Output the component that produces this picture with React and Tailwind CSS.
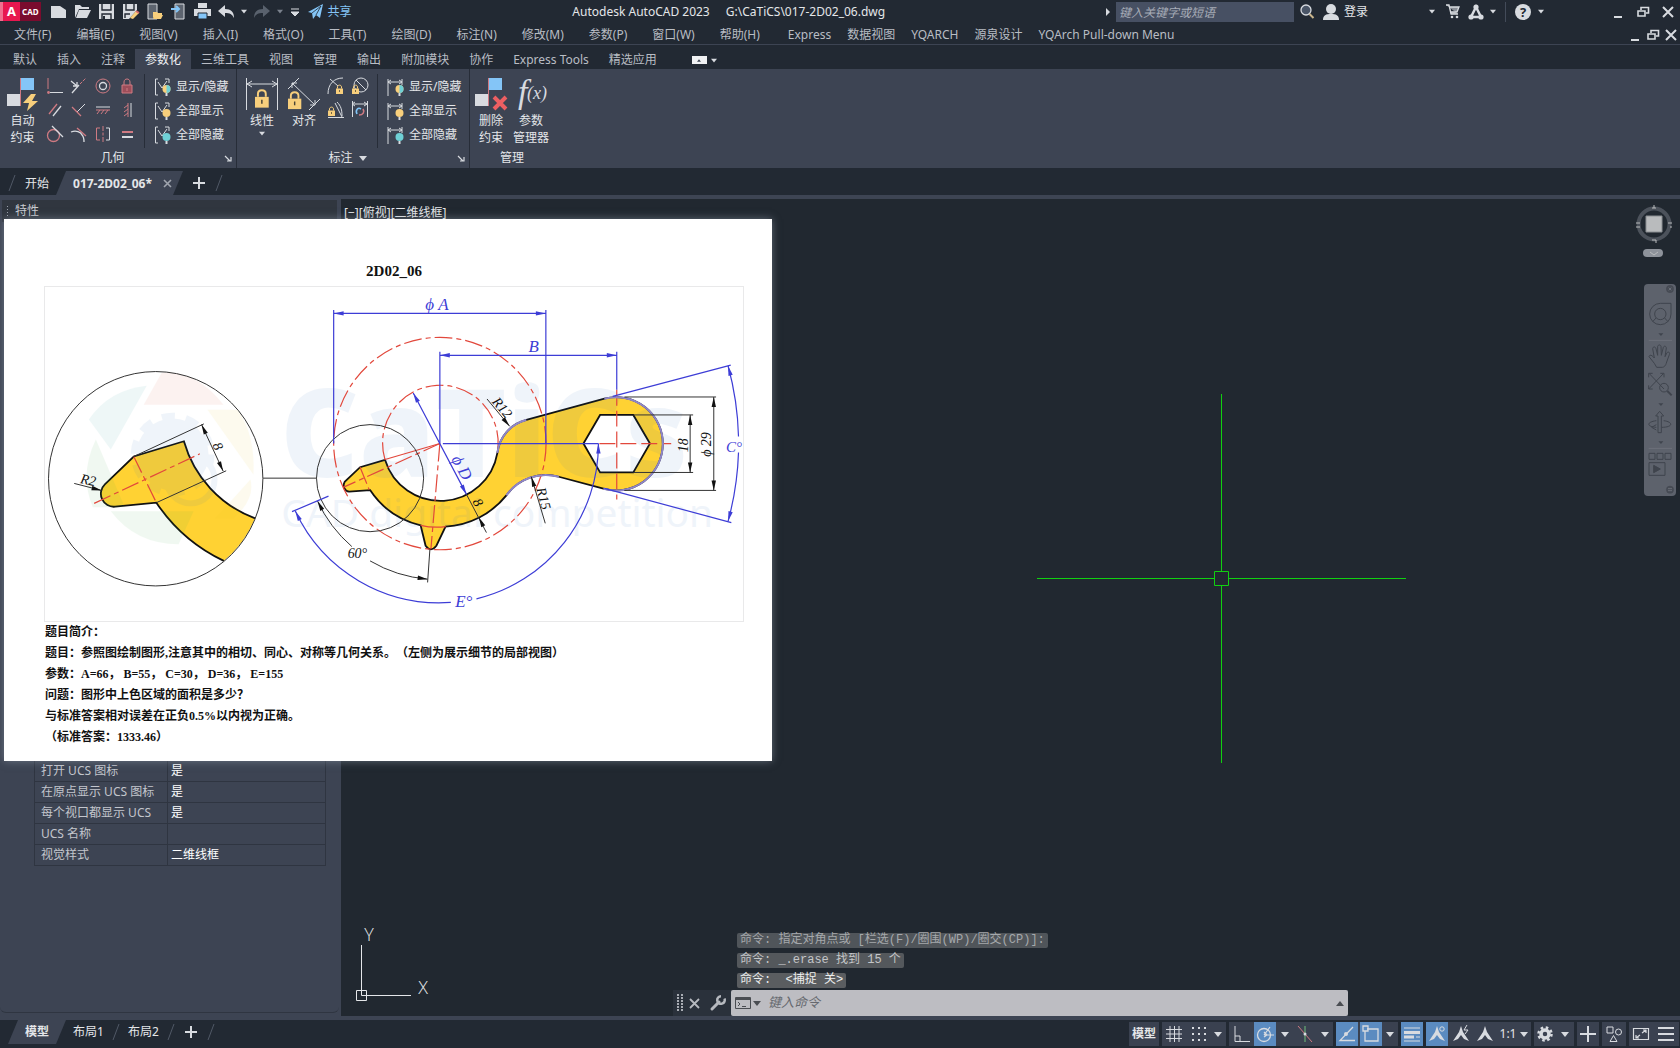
// src/App.jsx
import { useState } from "react";

const MENUS = ["文件(F)", "编辑(E)", "视图(V)", "插入(I)", "格式(O)", "工具(T)", "绘图(D)", "标注(N)", "修改(M)", "参数(P)", "窗口(W)", "帮助(H)"];
const EXTRA_MENUS = ["Express", "数据视图", "YQARCH", "源泉设计", "YQArch Pull-down Menu"];
const TABS = ["默认", "插入", "注释", "参数化", "三维工具", "视图", "管理", "输出", "附加模块", "协作", "Express Tools", "精选应用"];
const PROPS = [
  ["打开 UCS 图标", "是"],
  ["在原点显示 UCS 图标", "是"],
  ["每个视口都显示 UCS", "是"],
  ["UCS 名称", ""],
  ["视觉样式", "二维线框"],
];
const NOTES = [
  "题目简介：",
  "题目：参照图绘制图形,注意其中的相切、同心、对称等几何关系。（左侧为展示细节的局部视图）",
  "参数：A=66， B=55， C=30， D=36， E=155",
  "问题：图形中上色区域的面积是多少？",
  "与标准答案相对误差在正负0.5%以内视为正确。",
  "（标准答案：1333.46）",
];

const W = "#d8dbe0";
const P = "#cf7a82";
const Y = "#f8cf7c";
const B = "#84c5f7";
const C = "#6fd0d6";

function Svg({ w = 16, h = 16, box, className = "", children }) {
  return (
    <svg width={w} height={h} viewBox={box || `0 0 ${w} ${h}`} fill="none" className={`shrink-0 overflow-visible ${className}`} aria-hidden="true">
      {children}
    </svg>
  );
}

function Caret({ up, className = "", fill = W }) {
  return (
    <Svg w={8} h={5} className={className}>
      <path d={up ? "M0 5h8L4 0z" : "M0 0h8L4 5z"} fill={fill} />
    </Svg>
  );
}

function IconButton({ label, className = "", children }) {
  return (
    <button type="button" aria-label={label} className={`flex items-center justify-center shrink-0 ${className}`}>
      {children}
    </button>
  );
}

function Plus() {
  return <Svg w={12} h={12}><path d="M6 0v12M0 6h12" stroke={W} strokeWidth="2" /></Svg>;
}

function Slash() {
  return <Svg w={8} h={16}><path d="M7 0L1 16" stroke="#505866" /></Svg>;
}

function WindowButtons({ className }) {
  return (
    <div className={`flex items-center ${className}`}>
      <IconButton label="最小化"><Svg w={12} h={14}><path d="M2 12h8" stroke={W} strokeWidth="2" /></Svg></IconButton>
      <IconButton label="还原">
        <Svg w={12} h={12}><path d="M1 5h7v5H1zM4 4V1.5h7.5V7H9" stroke={W} strokeWidth="1.6" /></Svg>
      </IconButton>
      <IconButton label="关闭"><Svg w={12} h={12}><path d="M1 1l10 10M11 1L1 11" stroke={W} strokeWidth="2" /></Svg></IconButton>
    </div>
  );
}

/* ---------- title bar ---------- */

const QUICK = [
  ["新建", <path key="a" d="M1 3h9l6 4v8H1z" fill={W} />],
  ["打开", <path key="a" d="M1 15V2h5l2 2h7v2H5zM5 7h12l-4 8H2z" fill={W} />],
  ["保存", <g key="a"><path d="M1 1h15v15H1z" fill={W} /><path d="M4 1v6h9V1M4 16v-5h9v5" stroke="#222933" strokeWidth="1.4" /><path d="M6 13v3" stroke="#222933" strokeWidth="2" /></g>],
  ["另存为", <g key="a"><path d="M1 1h14v6l-8 9H1z" fill={W} /><path d="M4 1v6h8V1M3 15v-4h5" stroke="#222933" strokeWidth="1.4" /><path d="M8 15l6-7 3 2-6 6z" fill={Y} /><path d="M14 8l3 2" stroke="#d56b6b" strokeWidth="2" /></g>],
  ["从 Web 和移动设备打开", <g key="a"><path d="M2 1h9v15H2z" fill="#5d646f" stroke={W} /><path d="M7 15V9h4l1 1h4v2h-6zM9 12h8l-2 4H7z" fill={Y} /></g>],
  ["保存到 Web 和移动设备", <g key="a"><path d="M5 1h9v15H5z" fill="#5d646f" stroke={W} /><path d="M1 6h8M6 3l3 3-3 3" stroke={B} strokeWidth="2" /></g>],
  ["打印", <g key="a"><path d="M4 0h9v5H4zM0 6h17v7H0z" fill={W} /><path d="M4 10h9v6H4z" fill={B} stroke="#222933" /></g>],
];

function TitleBar() {
  return (
    <header className="flex items-center justify-between h-[23px] pr-[6px]">
      <div className="flex items-center h-full">
        <div className="flex h-[19px] items-center mr-[9px] bg-[#7a0c2e] text-white font-bold">
          <span className="w-[3px] h-full bg-[#f0708f]" />
          <span className="bg-[#e8174f] h-full w-[17px] text-center text-[13px] leading-[19px]">A</span>
          <span className="px-[2px] text-[8px]">CAD</span>
        </div>
        <div className="flex gap-[7px]">
          {QUICK.map(([label, art]) => (
            <IconButton key={label} label={label}><Svg w={17} h={17}>{art}</Svg></IconButton>
          ))}
        </div>
        <IconButton label="放弃" className="ml-[7px]">
          <Svg w={16} h={14}><path d="M0 6l7-6v4c6 0 9 3 9 9-2-4-4-5-9-5v4z" fill={W} /></Svg>
        </IconButton>
        <Caret className="ml-[6px] scale-75" />
        <IconButton label="重做" className="ml-[6px]">
          <Svg w={16} h={14}><path d="M16 6L9 0v4c-6 0-9 3-9 9 2-4 4-5 9-5v4z" fill="#59616d" /></Svg>
        </IconButton>
        <Caret className="ml-[6px] scale-75" fill="#7b828d" />
        <Svg w={8} h={8} className="ml-[7px]"><path d="M0 1h8M0 4h8L4 8z" stroke={W} strokeWidth="1" fill={W} /></Svg>
        <button type="button" className="flex items-center gap-[5px] ml-[9px] text-[#84c5f7]">
          <Svg w={15} h={15}><path d="M0 8L15 0l-3 14-4-3-3 4-1-6z" fill={B} /><path d="M4 9l9-7-5 9" stroke="#222933" strokeWidth="0.8" /></Svg>
          共享
        </button>
      </div>
      <h1 className="flex gap-4 text-[#e4e6e9]"><span>Autodesk AutoCAD 2023</span><span>G:\CaTiCS\017-2D02_06.dwg</span></h1>
      <div className="flex items-center">
        <Svg w={5} h={8} className="mr-[5px]"><path d="M0 0v8l4-4z" fill={W} /></Svg>
        <input
          type="search"
          aria-label="搜索"
          placeholder="键入关键字或短语"
          className="w-[178px] h-5 px-[3px] bg-[#475063] font-['Noto_Sans_CJK_SC',sans-serif] italic outline-none placeholder:text-[#a7adb8]"
        />
        <IconButton label="查找" className="ml-[6px]">
          <Svg w={14} h={15}><circle cx="6" cy="6" r="5" stroke={W} strokeWidth="1.3" fill="#4a5567" /><path d="M9.5 10l4 4" stroke="#c9b58c" strokeWidth="2" /></Svg>
        </IconButton>
        <button type="button" className="flex items-center gap-[5px] ml-[9px] text-[#e4e6e9]">
          <Svg w={16} h={16}><circle cx="8" cy="5" r="5" fill={W} /><path d="M0 16c0-5 3-6 8-6s8 1 8 6z" fill={W} /></Svg>
          登录
        </button>
        <Caret className="ml-[60px] scale-75" />
        <IconButton label="购物车" className="ml-[10px]">
          <Svg w={14} h={15}><path d="M0 1h3l2 9h7M4 3h9l-2 5H5" stroke={W} strokeWidth="1.3" fill="#8a8f97" /><circle cx="6" cy="13" r="1.3" fill={W} /><circle cx="11" cy="13" r="1.3" fill={W} /></Svg>
        </IconButton>
        <IconButton label="Autodesk App Store" className="ml-[8px]">
          <Svg w={16} h={16}><path d="M8 3L3 13h10z" stroke={W} strokeWidth="2.5" /><circle cx="8" cy="3" r="2.6" fill={W} /><circle cx="3" cy="13" r="2.6" fill={W} /><circle cx="13" cy="13" r="2.6" fill={W} /></Svg>
        </IconButton>
        <Caret className="ml-[5px] scale-75" />
        <span className="w-px h-5 bg-[#434b59] ml-[8px]" />
        <button type="button" aria-label="帮助" className="ml-[9px] size-4 rounded-full bg-[#d8dbe0] text-[#222933] font-bold text-[13px] leading-4">?</button>
        <Caret className="ml-[6px] scale-75" />
        <WindowButtons className="gap-[13px] ml-[67px]" />
      </div>
    </header>
  );
}

/* ---------- ribbon ---------- */

const GEOM = [
  ["重合", <g key="a"><path d="M1 0v11" stroke={P} /><circle cx="1.5" cy="14.5" r="1.4" fill={P} /><path d="M3 14.500h13" stroke={W} /></g>],
  ["共线", <g key="a"><path d="M1 15l7-8M0 3l6 5M6 4v4H2" stroke={W} strokeWidth="1.3" /><path d="M9 6l6-6" stroke={P} strokeDasharray="3 1" /></g>],
  ["同心", <g key="a"><circle cx="8" cy="8" r="7" stroke={P} /><circle cx="8" cy="8" r="3.5" stroke={W} strokeWidth="1.3" /></g>],
  ["固定", <g key="a"><path d="M3 7h10v8H3z" fill="#9d4e5a" stroke={P} /><path d="M5 7V4c0-4 6-4 6 0v3M8 10v3" stroke={P} /></g>],
  ["平行", <g key="a"><path d="M2 12L10 2" stroke={P} strokeWidth="1.3" /><path d="M6 14l8-10" stroke={W} strokeWidth="1.3" /></g>],
  ["垂直", <g key="a"><path d="M6 10l8-8" stroke={W} /><path d="M1 5l9 9" stroke={P} strokeWidth="1.3" /></g>],
  ["水平", <g key="a"><path d="M1 5h14" stroke={W} /><path d="M1 8h14M5 8l-3 4M9 8l-3 4M13 8l-3 4" stroke={P} /></g>],
  ["竖直", <g key="a"><path d="M12 1v14" stroke={W} /><path d="M9 1v14M9 3L5 6M9 7l-4 3M9 11l-4 3" stroke={P} /></g>],
  ["相切", <g key="a"><circle cx="6.500" cy="9.500" r="6" stroke={P} strokeWidth="1.3" /><path d="M5 0l11 11" stroke={W} strokeWidth="1.3" /></g>],
  ["平滑", <g key="a"><path d="M6 2l9 8" stroke={P} strokeWidth="1.3" /><path d="M0 6c5-2 10 0 11 3 2 2 2 4 2 7" stroke={W} strokeWidth="1.3" /></g>],
  ["对称", <g key="a"><path d="M5 2H1.500v12H5M8 0v5M8 6.500v3M8 11v5" stroke={P} /><path d="M11 2h3.500v12H11" stroke={W} /></g>],
  ["相等", <g key="a"><path d="M3 6h11" stroke={P} strokeWidth="2" /><path d="M3 11h11" stroke={W} strokeWidth="2" /></g>],
];

function Bulb({ kind }) {
  return (
    <g>
      <circle cx="12.500" cy="11" r="4" fill={kind === "hide" ? C : Y} />
      {kind === "both" && <path d="M12.500 7a4 4 0 010 8z" fill={C} />}
      <path d="M12.500 15v3" stroke={W} strokeWidth="2" />
    </g>
  );
}

function ShowHide({ art }) {
  return (
    <div className="flex flex-col">
      {[["显示/隐藏", "both"], ["全部显示", "show"], ["全部隐藏", "hide"]].map(([label, kind]) => (
        <button key={kind} type="button" className="flex items-center gap-1 h-6 pt-px whitespace-nowrap">
          <Svg w={18} h={18}>{art}<Bulb kind={kind} /></Svg>
          {label}
        </button>
      ))}
    </div>
  );
}

function BigButton({ icon, lines, caret, className }) {
  return (
    <button type="button" className={`flex flex-col items-center pt-[3px] leading-[17px] whitespace-nowrap ${className}`}>
      <Svg w={34} h={34} className="mb-px">{icon}</Svg>
      {lines.map(l => <span key={l}>{l}</span>)}
      {caret && <Caret className="mt-[2px] scale-75" />}
    </button>
  );
}

function Panel({ title, caret, launcher, className, children }) {
  return (
    <section className={`flex flex-col pt-[5px] ${className}`}>
      <div className="flex h-[74px]">{children}</div>
      <div className="flex items-center h-5">
        <span className="flex-1 flex items-center justify-center gap-[6px]">{title}{caret && <Caret />}</span>
        {launcher && (
          <IconButton label={`${title}设置`} className="mr-[4px]">
            <Svg w={7} h={7}><path d="M0 1l5 5M6 2v4H2" stroke={W} strokeWidth="1.2" /></Svg>
          </IconButton>
        )}
      </div>
    </section>
  );
}

const lockArt = (x, y, s) => (
  <g transform={`translate(${x} ${y}) scale(${s})`}>
    <path d="M3 7V4c0-5 8-5 8 0v3" stroke={Y} strokeWidth="2" />
    <path d="M0 7h14v11H0z" fill={Y} />
    <path d="M7 10v4" stroke="#4a4436" strokeWidth="1.5" />
  </g>
);
const bracketArt = <path d="M4 1H1.500v16H4M11 1h4v4M4 4l4 6M8 10l5-7" stroke={W} strokeWidth="1" />;
const linearArt = <path d="M1 1v17M15 1v6M1 4h14M4 2L1 4l3 2M12 2l3 2-3 2" stroke={W} strokeWidth="1" />;

const DIM = [
  ["半径", <g key="a"><path d="M1 17C1 7 7 1 16 1M3 2l8 7" stroke={W} />{lockArt(9, 8, 0.5)}</g>],
  ["直径", <g key="a"><circle cx="10" cy="8" r="7" stroke={W} /><path d="M5 3l10 10" stroke={W} />{lockArt(1, 8, 0.5)}</g>],
  ["角度", <g key="a"><path d="M1 16.500h16M8 2l7 14M10 1c4 4 5 8 5 14" stroke={W} />{lockArt(1, 6, 0.5)}</g>],
  ["转换", <g key="a"><path d="M1.500 0v16M16.500 0v16M1 3h15M4 1L1 3l3 2M13 1l3 2-3 2" stroke={W} /><path d="M6 13c-2-4 1-7 4-5" stroke={B} strokeWidth="1.6" /><path d="M12 8c2 3 0 6-4 6" stroke={P} strokeWidth="1.6" /></g>],
];

function Ribbon() {
  return (
    <div className="flex bg-[#3d4453] text-[#e4e6e9] h-[99px]">
      <Panel title="几何" launcher className="w-[237px] border-r border-[#272d38]">
        <BigButton
          className="w-[43px] pl-[2px]"
          lines={["自动", "约束"]}
          icon={<g><path d="M15 1h13v12H15z" fill={B} /><path d="M1 17h13v12H1z" fill={W} /><path d="M14.500 1v28" stroke={P} /><path d="M25 17l-8 9h6l-2 8 11-10h-6l4-7z" fill={Y} /></g>}
        />
        <div className="grid grid-cols-4 auto-rows-[24px] w-24 shrink-0">
          {GEOM.map(([label, art]) => <IconButton key={label} label={label}><Svg>{art}</Svg></IconButton>)}
        </div>
        <span className="w-px bg-[#272d38] ml-[5px] mr-[9px]" />
        <ShowHide art={bracketArt} />
      </Panel>
      <Panel title="标注" caret launcher className="w-[233px] border-r border-[#272d38]">
        <BigButton
          className="w-[50px]"
          lines={["线性"]}
          caret
          icon={<g><path d="M1.500 1v32M32.500 1v32M2 7h30M7 4L2 7l5 3M27 4l5 3-5 3" stroke={W} />{lockArt(10, 13, 0.98)}</g>}
        />
        <BigButton
          className="w-[34px]"
          lines={["对齐"]}
          icon={<g><path d="M1 12L12 1M22 33L33 22M5 6l23 22M5 11V6h5M28 23v5h-5" stroke={W} />{lockArt(1, 15, 0.95)}</g>}
        />
        <div className="grid grid-cols-2 auto-rows-[24px] w-12 ml-[3px] shrink-0">
          {DIM.map(([label, art]) => <IconButton key={label} label={label}><Svg w={18} h={18}>{art}</Svg></IconButton>)}
        </div>
        <span className="w-px bg-[#272d38] ml-[5px] mr-[9px]" />
        <ShowHide art={linearArt} />
      </Panel>
      <Panel title="管理" className="w-[84px]">
        <BigButton
          className="w-[42px]"
          lines={["删除", "约束"]}
          icon={<g><path d="M15 1h13v12H15z" fill={B} /><path d="M1 17h13v12H1z" fill={W} /><path d="M14.500 1v28" stroke={P} /><path d="M20 20l12 12M32 20L20 32" stroke="#ec5f62" strokeWidth="4" /></g>}
        />
        <BigButton
          className="w-[38px]"
          lines={["参数", "管理器"]}
          icon={<g fill={W} className="font-['Liberation_Serif',serif] italic"><text x="4" y="26" fontSize="34">f</text><text x="13" y="22" fontSize="18">(x)</text></g>}
        />
      </Panel>
    </div>
  );
}

/* ---------- reference card ---------- */

const BLUE = "#3d3dd6";
const RED = "#e2483c";
const INK = "#111111";

// filled arrow head whose tip lies on (x, y), a = direction in degrees
function Tip({ x, y, a, c = BLUE }) {
  return <path d="M0 0L-10 -2.200V2.200z" fill={c} stroke="none" transform={`translate(${x} ${y}) rotate(${a})`} />;
}

function DimText({ x, y, a = 0, size = 15, c = INK, children }) {
  return (
    <text transform={`translate(${x} ${y}) rotate(${a})`} fontSize={size} fill={c} stroke="none" textAnchor="middle" dominantBaseline="central">
      {children}
    </text>
  );
}

function Wrench() {
  return (
    <svg
      viewBox="44 287 700 335"
      className="block w-full border border-[#e9e9ea] font-['Liberation_Serif','DejaVu_Serif',serif] font-normal italic"
      fill="none"
      role="img"
      aria-label="2D02_06"
    >
      <path d="M526.700 420.300L605 399A46.800 46.800 0 11604 489.300L559.300 477.300A48.400 48.400 0 00506.700 496A83.900 83.900 0 01445.700 527.300L436.500 546.500Q431 553.500 425.700 546.500L420.700 526A83.900 83.900 0 01370 490.700L349 492.300A6.500 6.500 0 01344.500 482.500L360 467.700L385 460.300A58 58 0 00497.700 453.300A38.700 38.700 0 01526.700 420.300zM584 444l16.700 29H634l16.700-29L634 415.300h-33.300z" fill="#ffd233" fillRule="evenodd" stroke={INK} strokeWidth="1.8" />
      <path d="M183.300 441.700L133 457L104 485A13 13 0 00114.300 507.300L155.700 503.300A168 168 0 00223.300 561.700A107.500 107.500 0 00254.700 519A116 116 0 01183.300 441.700z" fill="#ffd233" />
      <path d="M254.700 519A116 116 0 01183.300 441.700L133 457L104 485A13 13 0 00114.300 507.300L155.700 503.300A168 168 0 00223.300 561.700" stroke={INK} strokeWidth="1.800" />

      {/* watermark */}
      <g opacity="0.07">
        <path d="M143 405L161 373Q195 370 223 405z" fill="#e05a3a" />
        <path d="M88 420Q108 390 146 386L110 450z" fill="#1c9a9a" />
        <path d="M207 410H237Q255 435 253 475z" fill="#e8c51a" />
        <path d="M95 440L124 508H92Q78 475 95 440zM110 512H193L178 545Q135 545 110 512z" fill="#3fae49" />
        <path d="M215 519L250 480Q255 500 233 519z" fill="#e8c51a" />
        <circle cx="172" cy="455" r="36" fill="#2a6fbd" />
        <circle cx="172" cy="455" r="38" stroke="#2a6fbd" strokeWidth="8" strokeDasharray="13 11" />
        <circle cx="190" cy="480" r="24" stroke="#2a6fbd" strokeWidth="6" />
        <text x="280" y="478" fontSize="122" fill="#2a6fbd" className="font-['Open_Sans',sans-serif] font-extrabold not-italic">CaTiCs</text>
        <text x="281" y="528" fontSize="39" fill="#2a6fbd" className="font-['Noto_Sans',sans-serif] not-italic">CAD digital competition</text>
      </g>

      {/* centre lines */}
      <g stroke={RED} strokeWidth="1.200" strokeDasharray="18 4 5 4">
        <circle cx="440" cy="444" r="106.500" />
        <path d="M385 460.300A58 58 0 11497.700 453.300" />
        <path d="M420.700 526Q433 529 446 527.300" strokeDasharray="none" />
        <path d="M440 444L343 488M440 444L431 550M93.300 504L199.300 454.300M133 457L155.700 503.300M360 467.700L369 490" />
        <path d="M440 444L385 460" strokeDasharray="none" />
        <path d="M617.400 390v110M600 444h72" strokeDasharray="16 5" />
      </g>
      <path d="M497.700 453.300A38.700 38.700 0 01526.700 420.300M605 399A46.800 46.800 0 11604 489.300M559.300 477.300A48.400 48.400 0 00506.700 496" stroke="#8f86c8" strokeWidth="2" />

      {/* black dimensions */}
      <g stroke="#333333" strokeWidth="1">
        <circle cx="155" cy="479.300" r="107.500" />
        <circle cx="370" cy="478.700" r="53.700" />
        <path d="M262.700 478.700h53.600M133 457L203.300 424.300M155.700 503.300L225.700 471.300M201 425L222.700 471.700M73.300 484L100.700 491" />
        <path d="M466.700 495L486.700 533.300M487.300 399.300L510 426.700M531.700 477.300L545.700 524M430 550L427.700 583.300" />
        <path d="M634 415.300h60M634 473h60M691 415.300V473M625 397.300h92M625 491h92M714.700 397.300V491" />
        <path d="M317.300 501.700A136 136 0 00351.700 547.300M370 561.700A136 136 0 00427.700 580" />
      </g>
      <Tip x={201} y={425} a={-115} c={INK} />
      <Tip x={222.7} y={471.7} a={65} c={INK} />
      <Tip x={100.700} y={491} a={14} c={INK} />
      <Tip x={479} y={518} a={-117} c={INK} />
      <Tip x={510} y={426.700} a={50} c={INK} />
      <Tip x={531.700} y={477.300} a={-107} c={INK} />
      <Tip x={691} y={415.300} a={-90} c={INK} />
      <Tip x={691} y={473} a={90} c={INK} />
      <Tip x={714.700} y={397.300} a={-90} c={INK} />
      <Tip x={714.700} y={491} a={90} c={INK} />
      <Tip x={317.300} y={501.700} a={-118} c={INK} />
      <Tip x={427.700} y={580} a={8} c={INK} />
      <DimText x={217.300} y={446.700} a={65} size={14}>8</DimText>
      <DimText x={87.300} y={480.700} a={12} size={14}>R2</DimText>
      <DimText x={478} y={503} a={62} size={14}>8</DimText>
      <DimText x={502.500} y={408} a={50} size={14}>R12</DimText>
      <DimText x={544} y={499} a={75} size={14}>R15</DimText>
      <DimText x={684} y={445.700} a={-90} size={14}>18</DimText>
      <DimText x={707.700} y={445} a={-90} size={14}>ϕ 29</DimText>
      <DimText x={357.300} y={554.300} size={14}>60°</DimText>

      {/* parametric dimensions */}
      <g stroke={BLUE} strokeWidth="1.200">
        <path d="M333.500 310v134M546.300 310v134M333.500 313.500h213M440 352v92M617.400 352v38M440 355.500h177.400M443 444h156" />
        <path d="M413.300 393.300L466.700 495M291.700 512.300L328.300 496.700M613.300 396.700L731.700 365.300M605 489L732.300 523.300" />
        <path d="M599 444A159.500 159.500 0 01476.700 599.700M451 603.300A159.500 159.500 0 01295 511.700" />
        <path d="M729 366A295 295 0 01739.500 437M739.500 453A295 295 0 01729 522" />
      </g>
      <Tip x={333.500} y={313.500} a={180} />
      <Tip x={546.300} y={313.500} a={0} />
      <Tip x={440} y={355.500} a={180} />
      <Tip x={617.400} y={355.500} a={0} />
      <Tip x={413.300} y={393.300} a={-118} />
      <Tip x={466.700} y={495} a={62} />
      <Tip x={599} y={444} a={-90} />
      <Tip x={295} y={511.700} a={-117} />
      <Tip x={729} y={366} a={-105} />
      <Tip x={729} y={522} a={105} />
      <DimText x={437} y={305} c={BLUE} size={17}>ϕ A</DimText>
      <DimText x={534} y={347} c={BLUE} size={17}>B</DimText>
      <DimText x={462} y={468} a={62} c={BLUE} size={17}>ϕ D</DimText>
      <DimText x={735} y={447} c={BLUE} size={15}>C°</DimText>
      <DimText x={464} y={602} c={BLUE} size={17}>E°</DimText>
    </svg>
  );
}

function TaskCard() {
  return (
    <article className="absolute left-[4px] top-[20px] z-10 w-[768px] pt-[41px] pb-[13px] pl-10 pr-[28px] bg-white text-[#111] shadow-[0_0_8px_rgba(140,150,165,0.6)] font-['Liberation_Serif','Noto_Sans_CJK_SC',serif] font-bold">
      <h2 className="text-center text-[15px] leading-[22px] mb-1">2D02_06</h2>
      <Wrench />
      {NOTES.map(n => <p key={n} className="pl-px text-[12px] leading-[21px] whitespace-nowrap [text-spacing-trim:space-all]">{n}</p>)}
    </article>
  );
}

/* ---------- work area ---------- */

function Palette() {
  return (
    <aside className="flex flex-col w-[341px] shrink-0 pr-[2px] pb-[3px] bg-[#3d4453]">
      <h2 className="flex items-center gap-[6px] h-[22px] mt-px mx-[2px] px-[4px] bg-[#30363f] text-[#c9ccd2]">
        <span className="w-[3px] h-3 bg-[radial-gradient(#9aa0aa_1px,transparent_1px)] bg-[size:3px_3px]" />
        特性
      </h2>
      <div className="flex-1 flex flex-col justify-end pb-[146px] pl-[34px] border-b border-[#2f3541] rounded-b-md">
        <table className="w-[292px] border-collapse table-fixed text-[#c3c6cd]">
          <tbody>
            {PROPS.map(([k, v]) => (
              <tr key={k} className="h-[21px]">
                <th scope="row" className="w-[133px] p-0 pl-[6px] border border-[#2f3541] font-normal text-left leading-5 whitespace-nowrap">{k}</th>
                <td className="p-0 pl-[3px] border border-[#2f3541] leading-5 text-white">{v}</td>
              </tr>
            ))}
          </tbody>
        </table>
      </div>
    </aside>
  );
}

function NavBar() {
  return (
    <div className="absolute right-[4px] top-[85px] w-8 h-[212px] flex flex-col items-center rounded bg-[#5d626c]">
      <Svg w={32} h={212} box="131 282 96 636">
        <g stroke="#3f444d" strokeWidth="3">
          <circle cx="209" cy="297" r="11" fill="#474c55" strokeWidth="1" />
          <path d="M205 293l8 8M213 293l-8 8" stroke="#7a7f88" strokeWidth="2" />
          <path d="M180 340h32v32a32 32 0 11-32-32z" />
          <circle cx="180" cy="372" r="17" />
          <path d="M157 395l10-11M203 395l-10-11" />
          <path d="M162 520l-16-20c2-8 10-4 16 4l-5-28c2-8 8-6 10 0l5 20v-27c2-6 9-5 10 0l1 27 6-24c3-6 9-3 9 2l-4 26 6-12c5-4 10 0 7 6l-8 22c-3 12-8 16-14 16h-16z" />
          <path d="M147 551l44 46M189 551l-44 46M145 562v-12h12M180 550h11v12M145 586v11h12" />
          <circle cx="191" cy="593" r="13" />
          <path d="M201 603l13 13" strokeWidth="6" />
          <path d="M173 728v-50h-7l12-14 12 14h-7v50z" />
          <path d="M168 692c-30 4-30 18 0 20M190 692c30 4 28 20-6 20M168 704l-14 8 14 8" />
          <path d="M146 790h18v18h-18zM170 790h18v18h-18zM194 790h18v18h-18zM146 818h48v38h-48z" />
          <path d="M160 826l20 11-20 11z" fill="#3f444d" />
          <circle cx="209" cy="899" r="11" fill="#474c55" strokeWidth="1" />
          <path d="M203 896h12M203 902h12" stroke="#7a7f88" strokeWidth="2" />
        </g>
        <path d="M174 430h15l-7 8zM174 640h15l-7 8zM174 754h15l-7 8z" fill="#3f444d" />
        <path d="M145 451h70M145 775h70" stroke="#747983" strokeWidth="2" />
      </Svg>
    </div>
  );
}

function CommandLine() {
  const [cmd, setCmd] = useState("");
  return (
    <div className="absolute left-[332px] bottom-0 w-[675px]">
      <div className="flex flex-col items-start gap-[5px] ml-[64px] mb-[2px] font-['Liberation_Mono','Noto_Sans_CJK_SC',monospace] text-[12px] leading-[15px]">
        <p className="px-[3px] rounded-xs bg-[#50555a] text-[#a5a8ab] whitespace-pre">命令: 指定对角点或 [栏选(F)/圈围(WP)/圈交(CP)]:</p>
        <p className="px-[3px] rounded-xs bg-[#54585c] text-[#c4c6c8] whitespace-pre">命令: _.erase 找到 15 个</p>
        <p className="px-[3px] rounded-xs bg-[#5a5d60] text-[#eceded] whitespace-pre">{"命令:  <捕捉 关>"}</p>
      </div>
      <div className="flex items-center h-[26px] bg-[#2a313b]">
        <Svg w={6} h={18} className="ml-[4px]">
          <path d="M1 0v18M5 0v18" stroke="#a9adb4" strokeWidth="2" strokeDasharray="2 1" />
        </Svg>
        <IconButton label="关闭命令行" className="ml-[7px]">
          <Svg w={9} h={9}><path d="M0 0l9 9M9 0L0 9" stroke="#b6b9bf" strokeWidth="1.800" /></Svg>
        </IconButton>
        <IconButton label="自定义" className="ml-[11px]">
          <Svg w={16} h={16}><path d="M2 14l7-7" stroke="#b6b9bf" strokeWidth="3" strokeLinecap="round" /><path d="M14.500 3.500A3.800 3.800 0 1111 1.200" stroke="#b6b9bf" strokeWidth="2.500" /></Svg>
        </IconButton>
        <div className="flex-1 flex items-center h-full ml-[5px] px-[4px] rounded-xs bg-[#bdbdc2]">
          <Svg w={16} h={12}><path d="M.500.500h15v11H.500z" stroke="#4a4d52" /><path d="M1 2h14" stroke="#4a4d52" strokeWidth="2" /><path d="M3 5l2 2-2 2M7 9.500h4" stroke="#4a4d52" /></Svg>
          <Caret className="ml-[2px]" fill="#4a4d52" />
          <input
            type="text"
            aria-label="命令"
            value={cmd}
            onChange={e => setCmd(e.target.value)}
            placeholder="键入命令"
            className="flex-1 h-5 mb-[4px] ml-[7px] bg-transparent font-['Noto_Sans_CJK_SC',sans-serif] text-[13px] italic text-[#222] outline-none placeholder:text-[#66696f]"
          />
          <Caret up fill="#4a4d52" />
        </div>
      </div>
    </div>
  );
}

function Viewport() {
  return (
    <main className="relative flex-1 overflow-hidden bg-[#212830]">
      <p className="pl-[3px] pt-[5px] leading-[18px] text-[#e4e6e9]">[−][俯视][二维线框]</p>

      {/* crosshair */}
      <Svg w={370} h={370} className="absolute left-[695px] top-[194px]">
        <path d="M185.500 1v177M185.500 192v178M1 185.500h177M192 185.500h178M178.500 178.500h14v14h-14z" stroke="#10d010" />
      </Svg>

      {/* UCS icon */}
      <Svg w={80} h={76} className="absolute left-[13px] bottom-[13px]">
        <path d="M7.500 18v50.500H57M2.500 63.500h10v10h-10z" stroke="#e4e6e9" />
        <g fill="#e4e6e9" fontSize="18" textAnchor="middle" className="font-['Open_Sans',sans-serif] font-light">
          <text x="15" y="14">Y</text>
          <text x="69" y="67">X</text>
        </g>
      </Svg>

      {/* view cube */}
      <Svg w={40} h={62} className="absolute right-[6px] top-[4px]">
        <circle cx="20" cy="21" r="15.500" stroke="#4c525b" strokeWidth="4" />
        <path d="M12 13h16v16H12z" fill="#b9bbbd" stroke="#8b8e92" />
        <path d="M18 5h4M20 2v3M2 20h4M2 24h4M34 20h4M36 24h2M18 37h4v3" stroke="#b9bbbd" />
        <rect x="9" y="46" width="20" height="8" rx="4" fill="#8e939b" />
        <path d="M16 49l4 3 4-3" stroke="#b9bbbd" />
      </Svg>
      <NavBar />
      <CommandLine />
    </main>
  );
}

/* ---------- status bar ---------- */

function Stat({ label, on, wide, children }) {
  return (
    <button type="button" aria-label={label} className={`flex items-center justify-center h-6 shrink-0 ${wide || "w-[22px]"} ${on ? "bg-[#5b8bc0]" : ""}`}>
      {children}
    </button>
  );
}

function StatGroup({ children }) {
  return <div className="flex items-center bg-[#3a4150]">{children}</div>;
}

const scaleMan = <path d="M9 1l2 6 6 9-5-2-3-4-3 4-5 2 6-9z" fill={W} />;

function StatusBar() {
  return (
    <footer className="flex items-start h-7 text-[#e4e6e9]">
      <nav className="flex items-center h-6 pl-[8px]">
        <button type="button" className="h-6 w-[58px] bg-[#3d4453] font-bold [clip-path:polygon(10px_0,100%_0,calc(100%-10px)_100%,0_100%)]">模型</button>
        <button type="button" className="ml-[7px] mr-[8px]">布局1</button>
        <Slash />
        <button type="button" className="mx-[8px]">布局2</button>
        <Slash />
        <IconButton label="新建布局" className="mx-[10px]"><Plus /></IconButton>
        <Slash />
      </nav>
      <div className="flex gap-[3px] ml-auto pt-[2px] pr-px">
        <StatGroup><Stat label="模型空间" wide="w-[30px] font-bold">模型</Stat></StatGroup>
        <StatGroup>
          <Stat label="栅格" wide="w-[24px]"><Svg><path d="M4 0v16M8.500 0v16M13 0v16M0 3.500h16M0 8h16M0 12.500h16" stroke={W} /></Svg></Stat>
          <Stat label="捕捉" wide="w-[24px]"><Svg><path d="M2 2h14M2 8h14M2 14h14" stroke={W} strokeWidth="2" strokeDasharray="2 4" /></Svg></Stat>
          <Stat label="捕捉设置" wide="w-[16px]"><Caret /></Stat>
        </StatGroup>
        <StatGroup>
          <Stat label="正交" wide="w-[25px]"><Svg><path d="M1 0v15.500h15M1 10h5v5" stroke={W} /></Svg></Stat>
          <Stat label="极轴" on><Svg w={18} h={18}><circle cx="8" cy="10" r="6.500" stroke={W} strokeWidth="1.300" /><path d="M8 10h10M8 10l6-8M8 7l3 3-3 2" stroke={W} strokeWidth="1.200" /></Svg></Stat>
          <Stat label="极轴设置" wide="w-[18px]"><Caret /></Stat>
          <Stat label="等轴测"><Svg><path d="M8 0v16" stroke="#6fbf7b" /><path d="M1 0l14 16" stroke={P} /><circle cx="8" cy="8" r="1.500" fill={W} /></Svg></Stat>
          <Stat label="等轴测设置" wide="w-[17px]"><Caret /></Stat>
        </StatGroup>
        <StatGroup>
          <Stat label="对象捕捉追踪" on><Svg><path d="M14 1L1 14.500h15" stroke={W} strokeWidth="1.300" /><circle cx="7" cy="8" r="2" fill={W} /></Svg></Stat>
          <span className="w-[2px]" />
          <Stat label="对象捕捉" on><Svg><path d="M4 3h11v12H2V5M0 0h5v5H0z" stroke={W} strokeWidth="1.300" /></Svg></Stat>
          <Stat label="对象捕捉设置" wide="w-[16px]"><Caret /></Stat>
        </StatGroup>
        <StatGroup><Stat label="线宽" on><Svg><path d="M0 2h16M0 15h16" stroke={W} /><path d="M0 6.500h16M0 11h10" stroke={W} strokeWidth="3" /><path d="M12 11h4" stroke={W} /></Svg></Stat></StatGroup>
        <StatGroup>
          <Stat label="注释可见性" on><Svg w={18} h={18}>{scaleMan}<circle cx="14" cy="4" r="2.200" stroke={W} /></Svg></Stat>
          <Stat label="自动缩放" wide="w-[25px]"><Svg w={18} h={18}>{scaleMan}<path d="M15 0l-3 5h4l-3 4" stroke={W} /></Svg></Stat>
          <Stat label="注释比例" wide="w-[24px]"><Svg w={18} h={18}>{scaleMan}</Svg></Stat>
          <Stat label="比例" wide="w-[34px] gap-[4px]">1:1<Caret /></Stat>
        </StatGroup>
        <StatGroup>
          <Stat label="工作空间">
            <Svg><circle cx="8" cy="8" r="4" stroke={W} strokeWidth="3.500" /><circle cx="8" cy="8" r="6.500" stroke={W} strokeWidth="2.500" strokeDasharray="2.550 2.550" /></Svg>
          </Stat>
          <Stat label="工作空间设置" wide="w-[18px]"><Caret /></Stat>
        </StatGroup>
        <StatGroup><Stat label="注释监视器"><Svg><path d="M8 0v16M0 8h16" stroke={W} strokeWidth="2" /></Svg></Stat></StatGroup>
        <StatGroup><Stat label="隔离对象" wide="w-6"><Svg><path d="M1 1h6v6H1zM4 15.500l3.500-6 3.500 6z" stroke={W} /><circle cx="12.500" cy="6" r="3" stroke={W} /></Svg></Stat></StatGroup>
        <StatGroup>
          <Stat label="全屏显示" wide="w-6"><Svg><path d="M.500 2.500h15v11H.500zM9 7l4-3M10 4h3v3M7 9l-4 3M3 9v3h3" stroke={W} strokeWidth="1.200" /></Svg></Stat>
          <Stat label="自定义" wide="w-[26px]"><Svg><path d="M0 2h16M0 8h16M0 14h16" stroke={W} strokeWidth="2" /></Svg></Stat>
        </StatGroup>
      </div>
    </footer>
  );
}

function App() {
  const [tab, setTab] = useState("参数化");

  return (
    <div className="flex flex-col h-screen overflow-hidden bg-[#222933] text-[12px] leading-4 text-[#b9bdc4] font-['Noto_Sans','Noto_Sans_CJK_SC',sans-serif]">
      <TitleBar />
      <nav className="flex items-center h-[22px] pt-[2px] pl-[14px] pr-[3px] border-b border-[#3d4453] whitespace-nowrap">
        <div className="flex gap-[25px]">
          {MENUS.map(m => <button key={m} type="button">{m}</button>)}
        </div>
        <div className="flex gap-4 ml-[28px]">
          {EXTRA_MENUS.map(m => <button key={m} type="button">{m}</button>)}
        </div>
        <WindowButtons className="gap-[6px] ml-auto" />
      </nav>
      <nav className="flex items-end h-6 pl-[3px] whitespace-nowrap">
        {TABS.map(t => (
          <button
            key={t}
            type="button"
            onClick={() => setTab(t)}
            className={`h-5 pt-[2px] px-[10px] ${tab === t ? "bg-[#3d4453] text-[#f0f1f3]" : ""}`}
          >
            {t}
          </button>
        ))}
        <button type="button" aria-label="最小化功能区" className="flex items-center gap-[3px] h-5 ml-[25px] pt-[2px]">
          <span className="flex items-center justify-center w-[15px] h-2 bg-[#f0f1f3]"><Caret up fill="#3d4453" className="scale-50" /></span>
          <Caret className="scale-75" />
        </button>
      </nav>
      <Ribbon />
      <nav className="flex items-center h-[27px] pt-[3px] pl-[8px] text-[#e4e6e9]">
        <Slash />
        <button type="button" className="ml-[9px] mr-[7px] pt-px">开始</button>
        <div className="flex items-center h-6 w-[127px] pl-[17px] bg-[#3d4453] [clip-path:polygon(10px_0,100%_0,calc(100%-10px)_100%,0_100%)]">
          <button type="button" className="pt-px font-bold">017-2D02_06*</button>
          <IconButton label="关闭图形" className="ml-[11px]"><Svg w={9} h={9}><path d="M1 1l7 7M8 1L1 8" stroke="#a0a5ae" strokeWidth="1.600" /></Svg></IconButton>
        </div>
        <IconButton label="新图形" className="ml-[10px] mr-[10px]"><Plus /></IconButton>
        <Slash />
      </nav>
      <div className="relative flex flex-1 min-h-0 border-y-4 border-[#3d4453]">
        <Palette />
        <Viewport />
        <TaskCard />
      </div>
      <StatusBar />
    </div>
  );
}

export default App;
